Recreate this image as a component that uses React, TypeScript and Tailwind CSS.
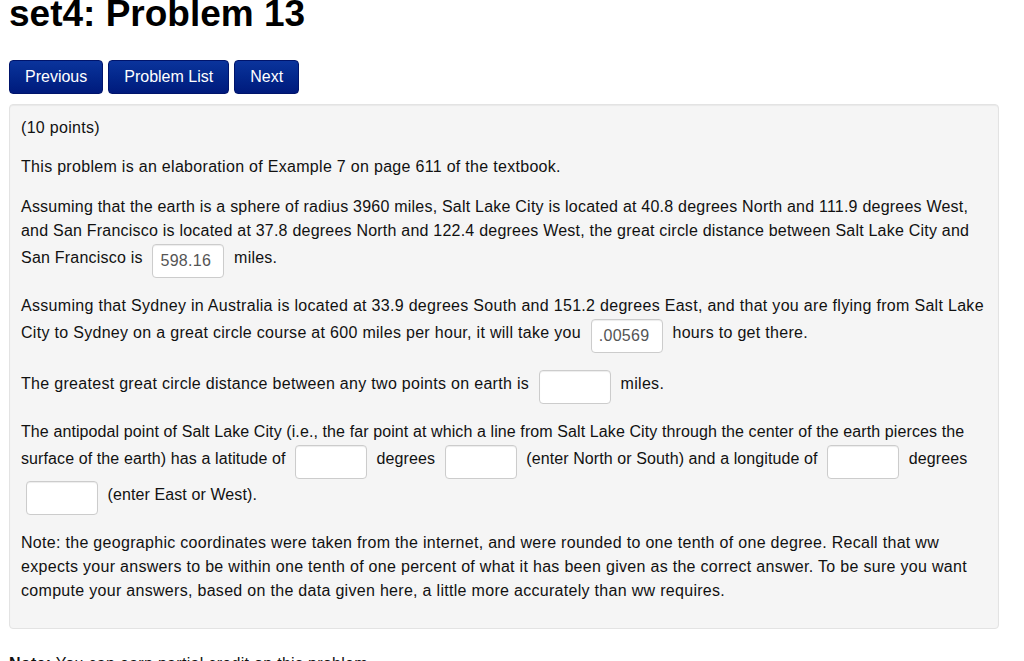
import React from "react";

function Answer({ value = "" }: { value?: string }) {
  return (
    <input
      readOnly
      value={value}
      className="mx-[5px] my-[1px] h-[34px] w-[72px] rounded-[4px] border border-[#cccccc] bg-white px-[7px] align-[-3px] text-[16px] tracking-[0.3px] text-[#555555] shadow-[inset_0_1px_1px_rgba(0,0,0,0.075)] outline-none"
    />
  );
}

function NavButton({ label }: { label: string }) {
  return (
    <button className="h-[34px] rounded-[4px] border border-[#00146b] bg-gradient-to-b from-[#0b349c] to-[#001a7c] px-[15px] text-[16px] text-white">
      {label}
    </button>
  );
}

export default function App() {
  return (
    <div className="min-h-[661px] bg-white px-[9px] text-[16px] leading-[24px] tracking-[0.3px] text-[#111111] [font-family:'Liberation_Sans',Arial,sans-serif]">
      <h1 className="-mt-[8px] mb-[24px] text-[37px] font-bold leading-[44px] tracking-normal text-black">
        set4: Problem 13
      </h1>

      <div className="mb-[10px] flex gap-[5px] tracking-normal">
        <NavButton label="Previous" />
        <NavButton label="Problem List" />
        <NavButton label="Next" />
      </div>

      <div className="w-[990px] rounded-[4px] border border-[#e3e3e3] bg-[#f5f5f5] px-[11px] pt-[11px] pb-[25px] shadow-[inset_0_1px_1px_rgba(0,0,0,0.05)]">
        <p className="mb-[15px]">(10 points)</p>
        <p className="mb-[16px]">
          This problem is an elaboration of Example 7 on page 611 of the textbook.
        </p>
        <p className="mb-[15px] tracking-[0.22px]">
          Assuming that the earth is a sphere of radius 3960 miles, Salt Lake City is located at 40.8
          degrees North and 111.9 degrees West, and San Francisco is located at 37.8 degrees North
          and 122.4 degrees West, the great circle distance between Salt Lake City and San Francisco
          is <Answer value="598.16" /> miles.
        </p>
        <p className="mb-[15px]">
          Assuming that Sydney in Australia is located at 33.9 degrees South and 151.2 degrees East,
          and that you are flying from Salt Lake City to Sydney on a great circle course at 600 miles
          per hour, it will take you <Answer value=".00569" /> hours to get there.
        </p>
        <p className="mb-[15px]">
          The greatest great circle distance between any two points on earth is <Answer /> miles.
        </p>
        <p className="mb-[15px] tracking-[0.1px]">
          The antipodal point of Salt Lake City (i.e., the far point at which a line from Salt Lake
          City through the center of the earth pierces the surface of the earth) has a latitude of{" "}
          <Answer /> degrees <Answer /> (enter North or South) and a longitude of <Answer /> degrees{" "}
          <Answer /> (enter East or West).
        </p>
        <p>
          Note: the geographic coordinates were taken from the internet, and were rounded to one
          tenth of one degree. Recall that ww expects your answers to be within one tenth of one
          percent of what it has been given as the correct answer. To be sure you want compute your
          answers, based on the data given here, a little more accurately than ww requires.
        </p>
      </div>

      <p className="mt-[23px]">
        <b>Note:</b> You can earn partial credit on this problem.
      </p>
    </div>
  );
}
